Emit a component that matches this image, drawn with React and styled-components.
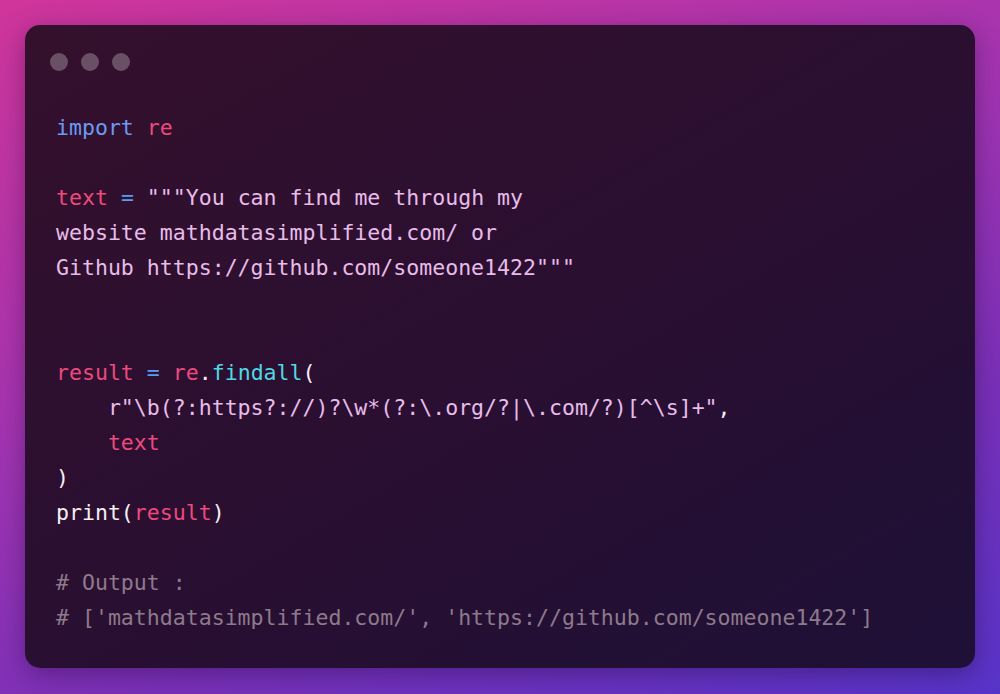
import React from 'react';
import styled, { createGlobalStyle } from 'styled-components';

const GlobalStyle = createGlobalStyle`
  html, body {
    margin: 0;
    padding: 0;
  }
  body {
    width: 1000px;
    height: 694px;
    overflow: hidden;
  }
`;

const Backdrop = styled.div`
  width: 1000px;
  height: 694px;
  box-sizing: border-box;
  padding: 25px 25px 26px;
  background: linear-gradient(160deg, #d0359b 0%, #a434b0 40%, #7a30b8 70%, #5734c8 100%);
`;

const Window = styled.div`
  height: 100%;
  box-sizing: border-box;
  border-radius: 15px;
  padding: 28px 31px 0;
  background: linear-gradient(150deg, #34102c 0%, #2a0f31 50%, #1e1037 100%);
  box-shadow: 0 6px 24px rgba(20, 0, 40, 0.35);
`;

const Dots = styled.div`
  display: flex;
  gap: 13px;
  margin-left: -6px;
  margin-bottom: 39px;
`;

const Dot = styled.span`
  width: 18px;
  height: 18px;
  border-radius: 50%;
  background: rgba(255, 255, 255, 0.27);
`;

const Code = styled.pre`
  margin: 0;
  font-family: "DejaVu Sans Mono", "Liberation Mono", monospace;
  font-size: 21.55px;
  line-height: 35px;
  color: #f2e8f2;
  white-space: pre;
`;

const colors = {
  kw: '#6a9af2',
  id: '#ec4a7c',
  op: '#5a9cf2',
  str: '#e8bce9',
  fn: '#4fd8e3',
  plain: '#f4eef4',
  cm: '#8e7a8b',
};

const Tok = styled.span`
  color: ${p => colors[p.$k]};
`;

const lines = [
  [['kw', 'import'], ['plain', ' '], ['id', 're']],
  [],
  [['id', 'text'], ['plain', ' '], ['op', '='], ['plain', ' '], ['str', '"""You can find me through my']],
  [['str', 'website mathdatasimplified.com/ or']],
  [['str', 'Github https://github.com/someone1422"""']],
  [],
  [],
  [['id', 'result'], ['plain', ' '], ['op', '='], ['plain', ' '], ['id', 're'], ['plain', '.'], ['fn', 'findall'], ['plain', '(']],
  [['plain', '    '], ['str', 'r"\\b(?:https?://)?\\w*(?:\\.org/?|\\.com/?)[^\\s]+"'], ['plain', ',']],
  [['plain', '    '], ['id', 'text']],
  [['plain', ')']],
  [['plain', 'print('], ['id', 'result'], ['plain', ')']],
  [],
  [['cm', '# Output :']],
  [['cm', "# ['mathdatasimplified.com/', 'https://github.com/someone1422']"]],
];

export default function App() {
  return (
    <>
      <GlobalStyle />
      <Backdrop>
        <Window>
          <Dots>
            <Dot />
            <Dot />
            <Dot />
          </Dots>
          <Code>
            {lines.map((line, i) => (
              <div key={i}>
                {line.length === 0
                  ? ' '
                  : line.map(([k, t], j) => (
                      <Tok key={j} $k={k}>
                        {t}
                      </Tok>
                    ))}
              </div>
            ))}
          </Code>
        </Window>
      </Backdrop>
    </>
  );
}
